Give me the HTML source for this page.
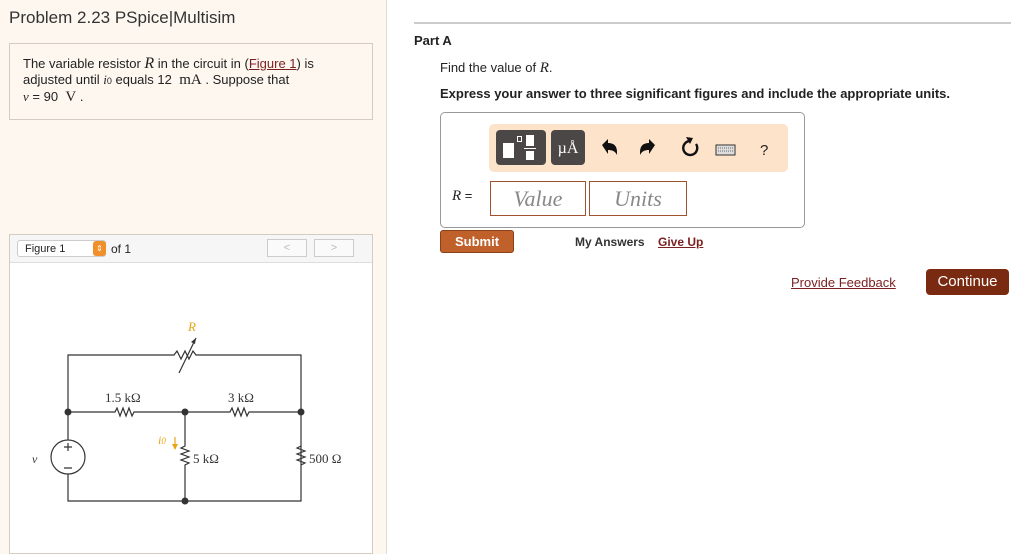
<!DOCTYPE html>
<html><head><meta charset="utf-8"><style>
*{margin:0;padding:0;box-sizing:border-box}
body{width:1024px;height:554px;overflow:hidden;background:#fff;font-family:"Liberation Sans",sans-serif;color:#222;position:relative}
.abs{position:absolute}
.left{left:0;top:0;width:387px;height:554px;background:#fdf7f0;border-right:1px solid #e6ddd2}
a{color:#7a1f1f}
.ser{font-family:"Liberation Serif",serif}
</style></head><body>
<div class="abs left"></div>
<div class="abs" style="left:9px;top:8px;font-size:17px;color:#333">Problem 2.23 PSpice|Multisim</div>
<div class="abs" style="left:9px;top:43px;width:364px;height:77px;border:1px solid #d4ccc2;background:#fdf7f0"></div>
<div class="abs" style="left:23px;top:56px;font-size:13px;line-height:16px;color:#222">The variable resistor <i class="ser" style="font-size:16px">R</i> in the circuit in (<a href="#">Figure 1</a>) is<br>adjusted until <i class="ser">i</i><span style="font-size:9px">0</span> equals 12 <span class="ser" style="font-size:15px">&nbsp;mA</span> . Suppose that<br><i class="ser">v</i> = 90 <span class="ser" style="font-size:15px">&nbsp;V</span> .</div>
<div class="abs" style="left:9px;top:234px;width:364px;height:320px;border:1px solid #d4ccc2;background:#fff"></div>
<div class="abs" style="left:10px;top:235px;width:362px;height:28px;background:#f6f6f6;border-bottom:1px solid #ddd"></div>
<div class="abs" style="left:17px;top:240px;width:89px;height:17px;border:1px solid #ccc;border-radius:3px;background:#fff;font-size:11px;padding:2px 0 0 7px">Figure 1</div>
<div class="abs" style="left:93px;top:241px;width:13px;height:15px;background:#f0902a;border-radius:3px;color:#fff;font-size:8px;text-align:center;line-height:15px">⇕</div>
<div class="abs" style="left:111px;top:242px;font-size:12px">of 1</div>
<div class="abs" style="left:267px;top:239px;width:40px;height:18px;border:1px solid #ccc;background:#fafafa;color:#bbb;font-size:11px;text-align:center;line-height:16px">&lt;</div>
<div class="abs" style="left:314px;top:239px;width:40px;height:18px;border:1px solid #ccc;background:#fafafa;color:#bbb;font-size:11px;text-align:center;line-height:16px">&gt;</div>
<svg class="abs" style="left:0;top:0" width="387" height="554">
<g stroke="#333" stroke-width="1.2" fill="none">
<path d="M68 412V355H174l3-4 4 8 4-8 4 8 4-8 3 4H301V501H68V474M68 440V412H115l2-4 3 8 3-8 3 8 3-8 3 8 2-4H230l2-4 3 8 3-8 3 8 3-8 3 8 2-4H301M185 412V446l-4 2 8 3-8 3 8 3-8 3 8 3-4 2V501M301 446l-4 2 8 3-8 3 8 3-8 3 8 3-4 2"/>
<circle cx="68" cy="457" r="17"/>
<path d="M179 373L196 338"/>
<path d="M64 447h8M68 443v8M64 468h8"/>
</g>
<path d="M196 338l-5 4 4 2z" fill="#333"/>
<path d="M175 437v8" stroke="#e8a317" stroke-width="1.2"/><path d="M172 444l3 6 3-6z" fill="#e8a317"/>
<g fill="#333"><circle cx="68" cy="412" r="3.5"/><circle cx="185" cy="412" r="3.5"/><circle cx="301" cy="412" r="3.5"/><circle cx="185" cy="501" r="3.5"/></g>
<g font-family="Liberation Serif" font-size="13" fill="#333">
<text x="188" y="331" fill="#e8a317" font-style="italic">R</text>
<text x="105" y="402">1.5 kΩ</text><text x="228" y="402">3 kΩ</text>
<text x="193" y="463">5 kΩ</text><text x="309" y="463">500 Ω</text>
<text x="32" y="463" font-style="italic" font-size="12">v</text>
<text x="158" y="444" fill="#e8a317" font-style="italic" font-size="12">i<tspan font-size="9">0</tspan></text>
</g>
</svg>
<div class="abs" style="left:414px;top:22px;width:597px;height:2px;background:#ccc"></div>
<div class="abs" style="left:414px;top:33px;font-size:13px;font-weight:bold;color:#222">Part A</div>
<div class="abs" style="left:440px;top:60px;font-size:13px">Find the value of <i class="ser" style="font-size:15px">R</i>.</div>
<div class="abs" style="left:440px;top:86px;font-size:13px;font-weight:bold">Express your answer to three significant figures and include the appropriate units.</div>
<div class="abs" style="left:440px;top:112px;width:365px;height:116px;border:1px solid #999;border-radius:5px"></div>
<div class="abs" style="left:489px;top:124px;width:299px;height:48px;background:#fde3c9;border-radius:5px"></div>
<div class="abs" style="left:496px;top:130px;width:50px;height:35px;background:#4a4746;border-radius:4px">
<div class="abs" style="left:7px;top:13px;width:11px;height:15px;background:#fff"></div>
<div class="abs" style="left:21px;top:6px;width:5px;height:6px;border:1px solid #fff"></div>
<div class="abs" style="left:30px;top:5px;width:8px;height:11px;background:#fff"></div>
<div class="abs" style="left:28px;top:18px;width:12px;height:1px;background:#fff"></div>
<div class="abs" style="left:30px;top:21px;width:8px;height:9px;background:#fff"></div></div>
<div class="abs ser" style="left:551px;top:130px;width:34px;height:35px;background:#4a4746;border-radius:4px;color:#fff;font-size:16px;text-align:center;line-height:38px">µÅ</div>
<svg class="abs" style="left:590px;top:130px" width="190" height="40">
<path d="M12 15l6-6v4c6 0 9 3 9 9v3c-2-4-5-5-9-5v4z" fill="#111"/>
<path d="M65 15l-6-6v4c-6 0-9 3-9 9v3c2-4 5-5 9-5v4z" fill="#111"/>
<path d="M100 11a7 7 0 1 0 6 3" stroke="#111" stroke-width="2.4" fill="none"/><path d="M96 7l7 1-3 6z" fill="#111"/>
<rect x="126" y="15" width="19" height="10" fill="#ddd" stroke="#333"/><path d="M128 18h15M128 21h15" stroke="#666" stroke-dasharray="1 1"/>
<text x="170" y="25" font-family="Liberation Sans" font-size="15" fill="#222">?</text>
</svg>
<div class="abs" style="left:452px;top:188px;font-size:13px"><i class="ser" style="font-size:15px">R</i> =</div>
<div class="abs ser" style="left:490px;top:181px;width:96px;height:35px;border:1px solid #a0522d;font-style:italic;font-size:22px;color:#888;text-align:center;line-height:34px">Value</div>
<div class="abs ser" style="left:589px;top:181px;width:98px;height:35px;border:1px solid #a0522d;font-style:italic;font-size:22px;color:#888;text-align:center;line-height:34px">Units</div>
<div class="abs" style="left:440px;top:230px;width:74px;height:23px;background:#c0602a;border:1px solid #8a4018;border-radius:3px;color:#fff;font-weight:bold;font-size:13px;text-align:center;line-height:21px">Submit</div>
<div class="abs" style="left:575px;top:235px;font-size:12px;font-weight:bold;color:#333">My Answers</div>
<div class="abs" style="left:658px;top:235px;font-size:12px;font-weight:bold"><a href="#">Give Up</a></div>
<div class="abs" style="left:791px;top:275px;font-size:13px"><a href="#">Provide Feedback</a></div>
<div class="abs" style="left:926px;top:269px;width:83px;height:26px;background:#7a2a10;border-radius:4px;color:#fff;font-size:15px;text-align:center;line-height:26px">Continue</div>
</body></html>
